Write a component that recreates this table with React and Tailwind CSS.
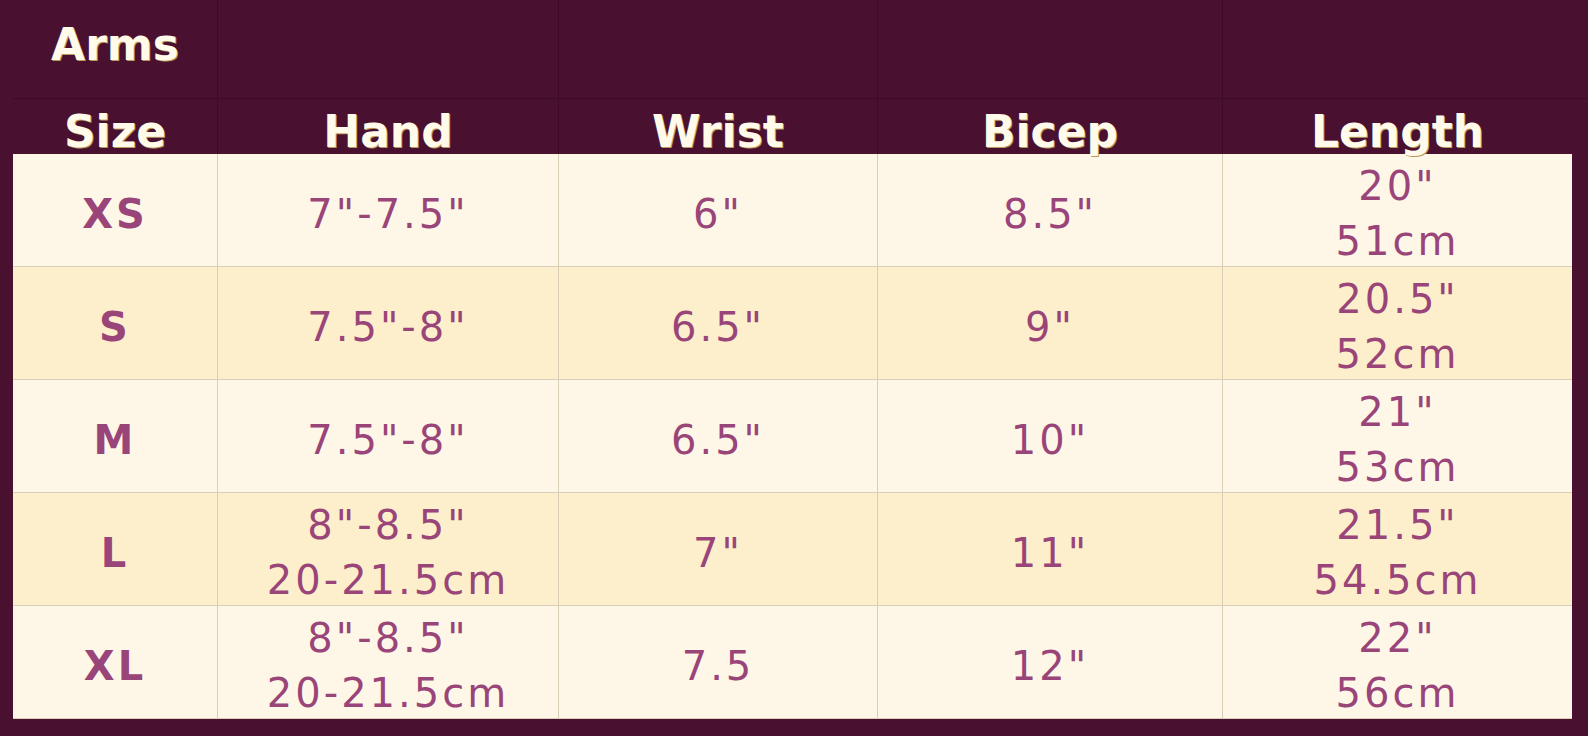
const rows = [
  { size: 'XS', hand: ['7"-7.5"'], wrist: '6"', bicep: '8.5"', length: ['20"', '51cm'] },
  { size: 'S', hand: ['7.5"-8"'], wrist: '6.5"', bicep: '9"', length: ['20.5"', '52cm'] },
  { size: 'M', hand: ['7.5"-8"'], wrist: '6.5"', bicep: '10"', length: ['21"', '53cm'] },
  { size: 'L', hand: ['8"-8.5"', '20-21.5cm'], wrist: '7"', bicep: '11"', length: ['21.5"', '54.5cm'] },
  { size: 'XL', hand: ['8"-8.5"', '20-21.5cm'], wrist: '7.5', bicep: '12"', length: ['22"', '56cm'] },
]

const cols = 'grid grid-cols-[205px_341px_319px_345px_349px]'
const head = 'flex items-center justify-center font-bold text-[44px] text-[#fffaea] [text-shadow:1px_1px_0_#b89a5a] border-r border-[#3e0b26]'
const cell = 'flex flex-col items-center justify-center min-h-0 border-r border-b border-[#d9cfb6] leading-[55px] tracking-[3px] pt-[8px]'

export default function App() {
  return (
    <div className="w-[1588px] h-[736px] bg-[#4a1030] pl-[13px] font-['DejaVu_Sans',Verdana,sans-serif]">
      <div className={`${cols} h-[99px] border-b border-[#3e0b26]`}>
        <div className={`${head} items-start pt-[12px]`}>Arms</div>
        <div className="border-r border-[#3e0b26]" />
        <div className="border-r border-[#3e0b26]" />
        <div className="border-r border-[#3e0b26]" />
        <div />
      </div>
      <div className={`${cols} h-[55px]`}>
        <div className={`${head} pb-[8px]`}>Size</div>
        <div className={`${head} pb-[8px]`}>Hand</div>
        <div className={`${head} pb-[8px]`}>Wrist</div>
        <div className={`${head} pb-[8px]`}>Bicep</div>
        <div className={`${head} pb-[8px] border-r-0`}>Length</div>
      </div>
      <div className="w-[1559px] text-[40px] text-[#9a4579]">
        {rows.map((r, i) => (
          <div key={r.size} className={`${cols} grid-rows-[113px] h-[113px] ${i % 2 ? 'bg-[#fdefcc]' : 'bg-[#fef7e7]'}`}>
            <div className={`${cell} font-bold`}>{r.size}</div>
            <div className={cell}>{r.hand.map(t => <span key={t}>{t}</span>)}</div>
            <div className={cell}>{r.wrist}</div>
            <div className={cell}>{r.bicep}</div>
            <div className={`${cell} border-r-0`}>{r.length.map(t => <span key={t}>{t}</span>)}</div>
          </div>
        ))}
      </div>
    </div>
  )
}
